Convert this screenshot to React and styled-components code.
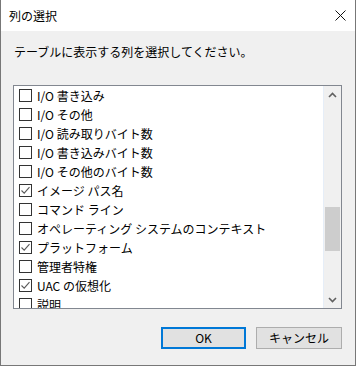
import React from 'react'
import styled, { createGlobalStyle } from 'styled-components'

const Global = createGlobalStyle`
  html, body { margin: 0; padding: 0; background: #fff; }
  body { font-family: "Noto Sans CJK JP", "Noto Sans", sans-serif; font-size: 12px; color: #000; }
`

const Window = styled.div`
  width: 356px;
  height: 366px;
  box-sizing: border-box;
  border: 1px solid #777;
  border-top: none;
  background: #f0f0f0;
  display: flex;
  flex-direction: column;
`

const TitleBar = styled.div`
  height: 31px;
  background: #fff;
  display: flex;
  align-items: center;
  justify-content: space-between;
  padding: 0 9px 0 8px;
  flex-shrink: 0;
`

const TitleText = styled.span`
  font-size: 12px;
  line-height: 16px;
`

const Body = styled.div`
  flex: 1;
  display: flex;
  flex-direction: column;
  padding: 0 13px 0 12px;
`

const Prompt = styled.div`
  height: 16px;
  line-height: 16px;
  margin-top: 13px;
  padding-left: 1px;
`

const ListBox = styled.div`
  margin-top: 25px;
  height: 224px;
  box-sizing: border-box;
  border: 1px solid #828790;
  background: #fff;
  display: flex;
  overflow: hidden;
`

const Rows = styled.div`
  flex: 1;
  overflow: hidden;
  padding-left: 5px;
`

const Row = styled.div`
  height: 19px;
  display: flex;
  align-items: center;
  gap: 5px;
  white-space: nowrap;
`

const Box = styled.span`
  width: 13px;
  height: 13px;
  box-sizing: border-box;
  border: 1px solid #333;
  background: #fff;
  display: flex;
  align-items: center;
  justify-content: center;
  flex-shrink: 0;
`

const Label = styled.span`
  line-height: 16px;
`

const ScrollBar = styled.div`
  width: 17px;
  background: #f0f0f0;
  border-left: 1px solid #e6eef8;
  display: flex;
  flex-direction: column;
  align-items: center;
`

const Arrow = styled.div`
  height: 17px;
  width: 100%;
  display: flex;
  align-items: center;
  justify-content: center;
`

const Track = styled.div`
  flex: 1;
  width: 100%;
  position: relative;
`

const Thumb = styled.div`
  position: absolute;
  left: 1px;
  right: 1px;
  background: #cdcdcd;
`

const Buttons = styled.div`
  display: flex;
  justify-content: flex-end;
  gap: 10px;
  margin-top: 18px;
`

const Button = styled.button`
  width: ${p => p.$w}px;
  height: 22px;
  box-sizing: border-box;
  background: #e1e1e1;
  border: ${p => (p.$primary ? '2px solid #0078d7' : '1px solid #adadad')};
  font-family: inherit;
  font-size: 12px;
  color: #000;
  padding: 0;
  line-height: 16px;
`

const items = [
  ['I/O 書き込み', false],
  ['I/O その他', false],
  ['I/O 読み取りバイト数', false],
  ['I/O 書き込みバイト数', false],
  ['I/O その他のバイト数', false],
  ['イメージ パス名', true],
  ['コマンド ライン', false],
  ['オペレーティング システムのコンテキスト', false],
  ['プラットフォーム', true],
  ['管理者特権', false],
  ['UAC の仮想化', true],
  ['説明', false],
]

function Check() {
  return (
    <svg width="11" height="11" viewBox="0 0 11 11">
      <path d="M1.5 5.5 L4.2 8.2 L9.5 2.2" fill="none" stroke="#5a5a5a" strokeWidth="1.1" />
    </svg>
  )
}

export default function App() {
  return (
    <Window>
      <Global />
      <TitleBar>
        <TitleText>列の選択</TitleText>
        <svg width="11" height="11" viewBox="0 0 11 11">
          <path d="M0.5 0.5 L10.5 10.5 M10.5 0.5 L0.5 10.5" stroke="#111" strokeWidth="1" />
        </svg>
      </TitleBar>
      <Body>
        <Prompt>テーブルに表示する列を選択してください。</Prompt>
        <ListBox>
          <Rows>
            {items.map(([text, checked]) => (
              <Row key={text}>
                <Box>{checked && <Check />}</Box>
                <Label>{text}</Label>
              </Row>
            ))}
          </Rows>
          <ScrollBar>
            <Arrow>
              <svg width="9" height="6" viewBox="0 0 9 6">
                <path d="M1 5 L4.5 1.5 L8 5" fill="none" stroke="#606060" strokeWidth="1.6" />
              </svg>
            </Arrow>
            <Track>
              <Thumb style={{ top: 104, height: 44 }} />
            </Track>
            <Arrow>
              <svg width="9" height="6" viewBox="0 0 9 6">
                <path d="M1 1 L4.5 4.5 L8 1" fill="none" stroke="#606060" strokeWidth="1.6" />
              </svg>
            </Arrow>
          </ScrollBar>
        </ListBox>
        <Buttons>
          <Button $primary $w={85}>OK</Button>
          <Button $w={86}>キャンセル</Button>
        </Buttons>
      </Body>
    </Window>
  )
}
